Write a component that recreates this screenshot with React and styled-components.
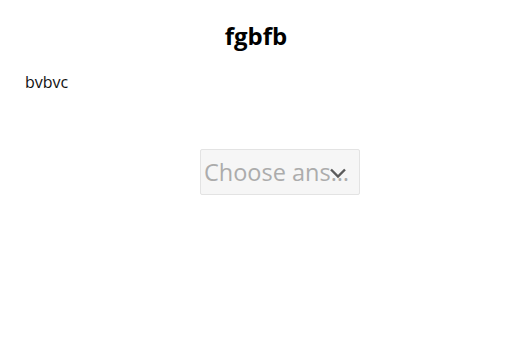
import React from "react";
import styled, { createGlobalStyle } from "styled-components";

const Global = createGlobalStyle`
  body {
    margin: 0;
    background: #ffffff;
    font-family: "Open Sans", sans-serif;
    color: #111;
  }
`;

const Page = styled.div`
  display: flex;
  flex-direction: column;
  padding: 20px 25px;
`;

const Title = styled.h1`
  margin: 0;
  text-align: center;
  font-size: 24px;
  font-weight: 700;
  line-height: 32px;
  color: #000;
`;

const Question = styled.p`
  margin: 18px 0 0;
  font-size: 16px;
  line-height: 24px;
`;

const SelectRow = styled.div`
  display: flex;
  justify-content: center;
  margin-top: 55px;
  padding-left: 48px;
`;

const Select = styled.div`
  position: relative;
  width: 158px;
  height: 44px;
  box-sizing: content-box;
  background: #f6f6f6;
  border: 1px solid #e3e3e3;
  border-radius: 2px;
  display: flex;
  align-items: center;
`;

const Placeholder = styled.span`
  padding: 0 10px 0 3px;
  font-size: 23.5px;
  line-height: 32px;
  color: #acacac;
  white-space: nowrap;
  overflow: hidden;
  text-overflow: ellipsis;
`;

const Chevron = styled.svg`
  position: absolute;
  right: 12px;
  top: 16px;
  width: 18px;
  height: 14px;
`;

export default function App() {
  return (
    <>
      <Global />
      <Page>
        <Title>fgbfb</Title>
        <Question>bvbvc</Question>
        <SelectRow>
          <Select>
            <Placeholder>Choose answer</Placeholder>
            <Chevron viewBox="0 0 18 14">
              <path d="M2 3.5l7 7 7-7" fill="none" stroke="#5a5a5a" strokeWidth="2.4" />
            </Chevron>
          </Select>
        </SelectRow>
      </Page>
    </>
  );
}
